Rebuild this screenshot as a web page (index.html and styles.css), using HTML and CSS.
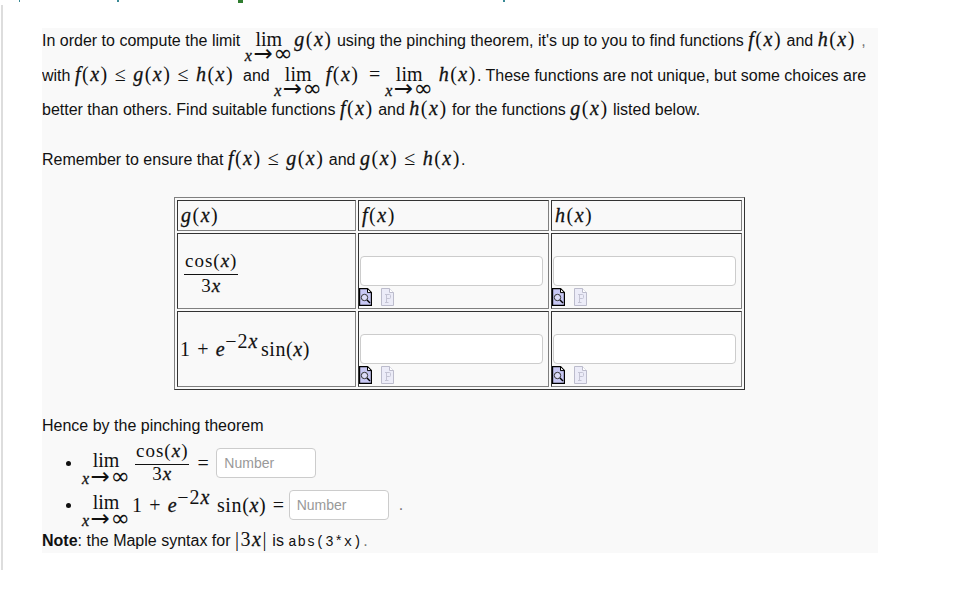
FILE: index.html
```html
<!DOCTYPE html>
<html lang="en">
<head>
    <meta charset="UTF-8">
    <title>Pinching theorem</title>
    <link rel="stylesheet" href="styles.css">
</head>
<body>
    <svg width="0" height="0" class="defs">
        <symbol id="ico-view" viewBox="0 0 13 18">
            <path d="M.6.6h8l3.800 4v12.800H.6z" fill="#c8c8f4" stroke="#000" stroke-width="1.200"/>
            <path d="M8.500.6v4h3.900z" fill="#fff" stroke="#000"/>
            <circle cx="5.500" cy="9.500" r="3.200" fill="#dcdcf8" stroke="#333"/>
            <path d="M8 12l3 3" stroke="#000" stroke-width="1.400"/>
        </symbol>
        <symbol id="ico-print" viewBox="0 0 13 18">
            <path d="M.5.5h8l4 4v13H.5z" fill="#ececf8" stroke="#bcbccc"/>
            <path d="M8.500.5v4h4" fill="#fff" stroke="#bcbccc"/>
            <path d="M4 6.500h4.500a1 1 0 0 1 1 1v2a1 1 0 0 1-1 1H6M5.500 6.500v8M4 14.500h3.500" fill="none" stroke="#c4c4d4"/>
        </symbol>
    </svg>
    <div class="topmarks">
        <span class="mark teal m1"></span>
        <span class="mark teal m2"></span>
        <span class="mark green m3"></span>
        <span class="mark teal m4"></span>
    </div>
    <div class="wrap">
        <div class="question">
            <p class="line first">In order to compute the limit <span class="lim"><span>lim</span><small><i>x</i><span class="sym">→∞</span></small></span> <span class="m"><i>g</i>(<i>x</i>)</span> using the pinching theorem, it's up to you to find functions <span class="m"><i>f</i>(<i>x</i>)</span> and <span class="m"><i>h</i>(<i>x</i>)</span> <span class="faint comma">,</span></p>
            <p class="line">with <span class="m"><i>f</i>(<i>x</i>) ≤ <i>g</i>(<i>x</i>) ≤ <i>h</i>(<i>x</i>)</span> &nbsp;and <span class="lim"><span>lim</span><small><i>x</i><span class="sym">→∞</span></small></span> <span class="m wide"><i>f</i>(<i>x</i>) =</span> <span class="lim gap"><span>lim</span><small><i>x</i><span class="sym">→∞</span></small></span> <span class="m"><i>h</i>(<i>x</i>)</span>. These functions are not unique, but some choices are</p>
            <p class="line">better than others. Find suitable functions <span class="m"><i>f</i>(<i>x</i>)</span> and <span class="m"><i>h</i>(<i>x</i>)</span> for the functions <span class="m"><i>g</i>(<i>x</i>)</span> listed below.</p>
            <p class="line remember">Remember to ensure that <span class="m"><i>f</i>(<i>x</i>) ≤ <i>g</i>(<i>x</i>)</span> and <span class="m"><i>g</i>(<i>x</i>) ≤ <i>h</i>(<i>x</i>)</span>.</p>

            <table class="grid">
                <tr class="head">
                    <td class="col-g"><span class="m"><i>g</i>(<i>x</i>)</span></td>
                    <td class="col-in"><span class="m"><i>f</i>(<i>x</i>)</span></td>
                    <td class="col-in"><span class="m"><i>h</i>(<i>x</i>)</span></td>
                </tr>
                <tr class="row-a">
                    <td><span class="frac indent"><span class="num">cos(<i>x</i>)</span><span class="den">3<i>x</i></span></span></td>
                    <td>
                        <input class="answer" type="text">
                        <div class="icons"><svg><use href="#ico-view"/></svg><svg><use href="#ico-print"/></svg></div>
                    </td>
                    <td>
                        <input class="answer" type="text">
                        <div class="icons"><svg><use href="#ico-view"/></svg><svg><use href="#ico-print"/></svg></div>
                    </td>
                </tr>
                <tr class="row-b">
                    <td><span class="expr">1 + <i>e</i><sup>−2<i>x</i></sup> sin(<i>x</i>)</span></td>
                    <td>
                        <input class="answer" type="text">
                        <div class="icons"><svg><use href="#ico-view"/></svg><svg><use href="#ico-print"/></svg></div>
                    </td>
                    <td>
                        <input class="answer" type="text">
                        <div class="icons"><svg><use href="#ico-view"/></svg><svg><use href="#ico-print"/></svg></div>
                    </td>
                </tr>
            </table>

            <p class="hence">Hence by the pinching theorem</p>
            <ul class="limits">
                <li>
                    <span class="lim big"><span>lim</span><small><i>x</i><span class="sym">→∞</span></small></span>
                    <span class="frac"><span class="num">cos(<i>x</i>)</span><span class="den">3<i>x</i></span></span>
                    <span class="expr eq">=</span>
                    <input class="num-input" type="text" placeholder="Number">
                </li>
                <li>
                    <span class="lim big"><span>lim</span><small><i>x</i><span class="sym">→∞</span></small></span>
                    <span class="expr">1 + <i>e</i><sup>−2<i>x</i></sup> sin(<i>x</i>) =</span>
                    <input class="num-input" type="text" placeholder="Number">
                    <span class="faint dot">.</span>
                </li>
            </ul>
            <p class="note"><b>Note</b>: the Maple syntax for <span class="m">|3<i>x</i>|</span> is <code>abs(3*x)</code><span class="faint">.</span></p>
        </div>
    </div>
</body>
</html>
```

FILE: styles.css
```css
html, body { margin: 0; padding: 0; background: #fff; }
body { font-family: "Liberation Sans", Arial, sans-serif; font-size: 16px; color: #111; height: 607px; overflow: hidden; }
.defs { display: block; height: 0; }

.topmarks { display: flex; height: 3px; overflow: hidden; }
.mark { display: block; height: 2px; }
.mark.green { background: #2f7d2f; height: 3px; }
.mark.teal { background: #3a8a96; }
.m1 { width: 1px; margin-left: 19px; }
.m2 { width: 2px; margin-left: 97px; }
.m3 { width: 5px; margin-left: 119px; }
.m4 { width: 2px; margin-left: 260px; }

.wrap { border-left: 2px solid #ddd; margin-left: 1px; margin-top: 2px; height: 565px; padding-top: 23px; box-sizing: border-box; }
.question { background: #f9f9f9; margin-left: 39px; width: 836px; height: 525px; padding-top: 1px; box-sizing: border-box; overflow: hidden; }

p { margin: 0; }
.line { height: 34px; line-height: 34px; white-space: nowrap; }
.first { height: 24px; line-height: 24px; margin-bottom: 6px; }
.remember { margin-top: 16px; }

.m { font-family: "Liberation Serif", serif; font-size: 20px; line-height: 1; letter-spacing: 1.5px; word-spacing: -.5px; white-space: nowrap; }
.m.wide { word-spacing: 3px; margin-left: 2px; }
.m i, .lim i, .frac i, .expr i { -webkit-text-stroke: 0.3px; }
.faint { color: #777; }
.comma { margin-left: 1px; }

.lim { display: inline-flex; flex-direction: column; align-items: center; font-family: "Liberation Serif", serif; font-size: 20px; line-height: 15px; height: 15px; margin: 0 -3px 0 0; }
.lim.gap { margin: 0 1px 0 -1px; }
.lim small { font-size: 16px; line-height: 13px; white-space: nowrap; letter-spacing: 1.500px; }
.sym { font-family: "DejaVu Sans", sans-serif; font-size: 23px; letter-spacing: .5px; }
.lim.big { height: 32px; line-height: 18px; margin: 8px 3px 0 0; }
.lim.big small { line-height: 14px; }

.grid { border: 1px solid; border-color: #808080 #333 #333 #808080; border-spacing: 2px; margin: 20px 0 0 132px; width: 571px; table-layout: fixed; }
.grid td { border: 1px solid; border-color: #333 #808080 #808080 #333; padding: 0 0 0 3px; vertical-align: middle; }
.col-g { width: 174px; }
.head td { height: 29px; }
.row-a td { height: 74px; vertical-align: bottom; padding-left: 0; }
.row-b td { height: 74px; vertical-align: bottom; padding-left: 0; }
.row-a td:first-child, .row-b td:first-child { vertical-align: middle; padding-left: 2px; }
.grid sup { margin-right: -4px; }

.expr { font-family: "Liberation Serif", serif; font-size: 20px; line-height: 1; letter-spacing: .6px; word-spacing: 1px; white-space: nowrap; }
.expr sup { font-size: 20px; line-height: 0; vertical-align: 8px; letter-spacing: 1px; }

.frac { display: inline-flex; flex-direction: column; align-items: center; font-family: "Liberation Serif", serif; font-size: 19px; letter-spacing: 1px; margin: -2px 0 0 2px; }
.frac.indent { margin: 3px 0 0 4px; }
.num { border-bottom: 1px solid #111; line-height: 20px; padding: 0 1px 3px; }
.den { line-height: 18px; }
.frac.indent .den { padding-top: 2px; }

.answer { display: block; box-sizing: border-box; width: 183px; height: 30px; margin: 0 0 2px 1px; background: #fff; border: 1px solid #ccc; border-radius: 4px; padding: 0 8px; }
.icons { display: flex; gap: 9px; height: 18px; margin-bottom: 2px; }
.icons svg { display: block; width: 13px; height: 18px; }

.hence { margin-top: 25px; height: 22px; line-height: 22px; }
.limits { list-style: none; margin: 5px 0 0; padding: 0 0 0 24px; }
.limits li { display: flex; align-items: center; height: 42px; white-space: nowrap; }
.limits li::before { content: ""; width: 5px; height: 5px; border-radius: 50%; background: #111; margin-right: 11px; flex: none; }
.eq { margin: 0 7px 0 8px; }
.limits .lim + .expr { margin: 0 4px 0 -1px; }
.num-input { box-sizing: border-box; width: 100px; height: 30px; background: #fff; border: 1px solid #ccc; border-radius: 4px; padding: 0 7px; font: 14px "Liberation Sans", Arial, sans-serif; }
.num-input::placeholder { color: #999; opacity: 1; }
.dot { margin-left: 10px; }
.note { margin-top: 3px; height: 24px; line-height: 24px; white-space: nowrap; }
code { font-family: "Liberation Mono", monospace; font-size: 14px; letter-spacing: .85px; margin-right: 1px; }
```
